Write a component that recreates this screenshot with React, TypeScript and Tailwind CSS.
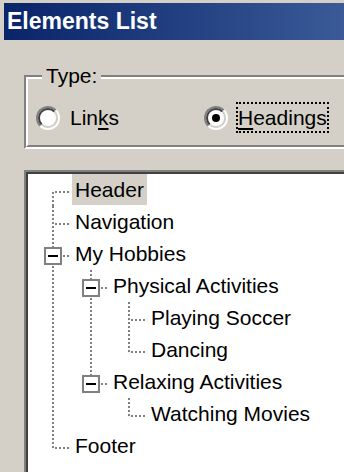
import React from 'react';

type Node = { label: string; children?: Node[] };

const tree: Node[] = [
  { label: 'Header' },
  { label: 'Navigation' },
  {
    label: 'My Hobbies',
    children: [
      { label: 'Physical Activities', children: [{ label: 'Playing Soccer' }, { label: 'Dancing' }] },
      { label: 'Relaxing Activities', children: [{ label: 'Watching Movies' }] },
    ],
  },
  { label: 'Footer' },
];

type Row = {
  label: string;
  depth: number;
  first: boolean;
  hasNext: boolean;
  hasChildren: boolean;
  guides: boolean[];
};

function flatten(nodes: Node[], depth = 0, guides: boolean[] = []): Row[] {
  const out: Row[] = [];
  nodes.forEach((n, i) => {
    const hasNext = i < nodes.length - 1;
    out.push({
      label: n.label,
      depth,
      first: depth === 0 && i === 0,
      hasNext,
      hasChildren: !!n.children?.length,
      guides,
    });
    if (n.children) out.push(...flatten(n.children, depth + 1, [...guides, hasNext]));
  });
  return out;
}

const dot = { stroke: '#808080', strokeWidth: 2, strokeDasharray: '2 2' };

function Guide({ on }: { on: boolean }) {
  return (
    <svg width="38" height="32" className="shrink-0" shapeRendering="crispEdges">
      {on && <line x1="20" y1="0" x2="20" y2="32" {...dot} />}
    </svg>
  );
}

function Joint({ row }: { row: Row }) {
  return (
    <svg width="38" height="32" className="shrink-0" shapeRendering="crispEdges">
      <line x1="20" y1={row.first ? 18 : 0} x2="20" y2={row.hasNext ? 32 : 18} {...dot} />
      <line x1="22" y1="18" x2="38" y2="18" {...dot} />
      {row.hasChildren && (
        <g>
          <rect x="12" y="10" width="16" height="16" fill="#ffffff" stroke="#808080" strokeWidth="2" />
          <line x1="15" y1="18" x2="25" y2="18" stroke="#000000" strokeWidth="2" />
        </g>
      )}
    </svg>
  );
}

function Radio({ checked }: { checked?: boolean }) {
  return (
    <span className="w-[24px] h-[24px] shrink-0 rounded-full border-2 border-t-[#808080] border-l-[#808080] border-b-white border-r-white">
      <span className="flex items-center justify-center w-full h-full rounded-full bg-white border-2 border-t-[#404040] border-l-[#404040] border-b-[#d4d0c8] border-r-[#d4d0c8]">
        {checked && <span className="w-[8px] h-[8px] rounded-full bg-black" />}
      </span>
    </span>
  );
}

export default function App() {
  const rows = flatten(tree);
  return (
    <div className="w-[344px] h-[472px] overflow-hidden bg-[#d4d0c8] pt-[3px] pl-[4px] font-['Liberation_Sans',Arial,sans-serif] text-black">
      <div className="w-[400px] h-[37px] bg-gradient-to-r from-[#0a246a] to-[#44639f] pl-[3px] text-white font-bold text-[23px] leading-[37px]">
        Elements List
      </div>

      <div className="ml-[20px] mt-[35px] w-[400px] relative border-t-2 border-l-2 border-t-[#808080] border-l-[#808080] border-b-2 border-r-2 border-b-white border-r-white">
        <div className="h-[70px] border-t-2 border-l-2 border-t-white border-l-white border-b-2 border-r-2 border-b-[#808080] border-r-[#808080] pl-[8px] pt-[23px]">
          <div className="flex items-center h-[31px] text-[21px]">
            <label className="flex items-center w-[168px]">
              <Radio />
              <span className="ml-[10px]">
                Lin<span className="underline underline-offset-[3px] decoration-2">k</span>s
              </span>
            </label>
            <label className="flex items-center">
              <Radio checked />
              <span className="ml-[8px] h-[31px] leading-[27px] border-2 border-dotted border-black">
                <span className="underline underline-offset-[3px] decoration-2">H</span>eadings
              </span>
            </label>
          </div>
        </div>
        <span className="absolute -top-[13px] left-[16px] px-[4px] bg-[#d4d0c8] text-[21px] leading-[24px]">Type:</span>
      </div>

      <div className="ml-[20px] mt-[21px] w-[400px] h-[320px] border-t-2 border-l-2 border-[#808080]">
        <div className="h-full bg-white border-t-2 border-l-2 border-[#404040] pl-[5px] text-[21px]">
          {rows.map((r, i) => (
            <div key={i} className="flex h-[32px]">
              {r.guides.map((g, j) => (
                <Guide key={j} on={g} />
              ))}
              <Joint row={r} />
              <span
                className={
                  'ml-[1px] px-[3px] h-[31px] leading-[31px] whitespace-nowrap ' +
                  (i === 0 ? 'bg-[#d4d0c8]' : '')
                }
              >
                {r.label}
              </span>
            </div>
          ))}
        </div>
      </div>
    </div>
  );
}
